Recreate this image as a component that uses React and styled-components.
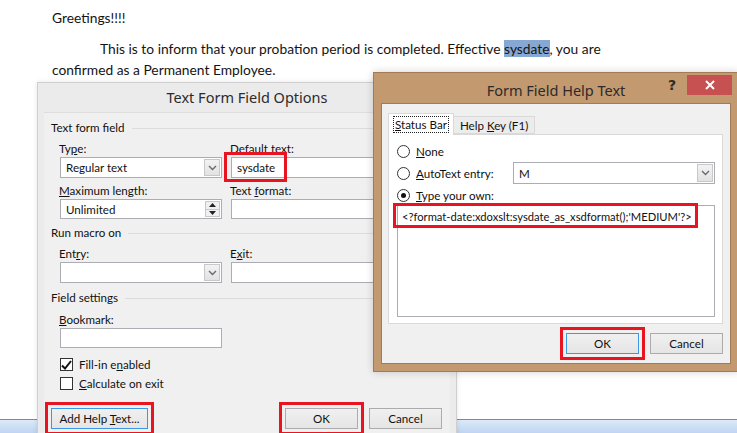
import React from "react";
import styled, { createGlobalStyle, css } from "styled-components";

const GlobalStyle = createGlobalStyle`
  html, body { margin: 0; padding: 0; background: #fff; overflow: hidden; }
  * { box-sizing: border-box; }
`;

const Screen = styled.div`
  position: relative;
  width: 737px;
  height: 433px;
  overflow: hidden;
  display: flex;
  flex-direction: column;
  background: #fff;
`;

/* ---------- document behind the dialogs ---------- */

const Doc = styled.div`
  padding: 7px 0 0 52px;
  font-family: Lato, "Liberation Sans", sans-serif;
  font-size: 13.8px;
  line-height: 21px;
  color: #141414;
`;

const Para = styled.p`
  margin: 0 0 ${(p) => p.$gap || 0}px;
`;

const Indent = styled.span`
  display: inline-block;
  width: 48px;
`;

const Selected = styled.span`
  background: #86a8d2;
`;

const StatusStrip = styled.div`
  margin-top: auto;
  height: 14px;
  border-top: 1px solid #6a8dbf;
  background: linear-gradient(#dde9f9, #bed5f2);
`;

/* ---------- window chrome ---------- */

const Window = styled.div`
  position: absolute;
  left: ${(p) => p.$x}px;
  top: ${(p) => p.$y}px;
  width: ${(p) => p.$w}px;
  height: ${(p) => p.$h}px;
  display: flex;
  flex-direction: column;
  font-family: Lato, "Noto Sans", sans-serif;
  font-size: 11.6px;
  color: #111;
  ${(p) =>
    p.$active
      ? css`
          background: #c3996f;
          border: 1px solid #a37a55;
          box-shadow: 0 0 8px rgba(0, 0, 0, 0.18);
        `
      : css`
          background: #ebebeb;
          border: 1px solid #cfcfcf;
          box-shadow: 0 0 5px rgba(0, 0, 0, 0.1);
        `}
`;

const TitleBar = styled.div`
  height: ${(p) => p.$h}px;
  display: grid;
  grid-template-columns: 1fr auto 1fr;
  align-items: start;
`;

const Title = styled.div`
  grid-column: 2;
  font-family: "Noto Sans", sans-serif;
  font-size: 14.5px;
  line-height: ${(p) => p.$h}px;
  color: #2b2b2b;
  white-space: nowrap;
`;

const Caption = styled.div`
  grid-column: 3;
  justify-self: end;
  display: flex;
  align-items: center;
  padding-top: 2px;
  padding-right: 6px;
`;

const HelpGlyph = styled.span`
  font-family: "DejaVu Sans", sans-serif;
  font-weight: bold;
  font-size: 14px;
  color: #2a2a2a;
  width: 30px;
  text-align: center;
  line-height: 20px;
`;

const CloseBtn = styled.div`
  width: 45px;
  height: 20px;
  background: #c75050;
  display: flex;
  align-items: center;
  justify-content: center;
`;

const Client = styled.div`
  flex: 1;
  display: flex;
  flex-direction: column;
  background: #f0f0f0;
  ${(p) =>
    p.$active
      ? css`
          margin: 0 7px 7px 7px;
          border: 1px solid #9f7b58;
          padding: 9px 7px 0 6px;
        `
      : css`
          margin: 0 6px;
          border-top: 1px solid #dedede;
          padding: 6px 8px 0 7px;
        `}
`;

/* ---------- form controls ---------- */

const GroupHead = styled.div`
  display: flex;
  align-items: center;
  gap: 7px;
  height: 16px;
  line-height: 16px;
  margin-top: ${(p) => p.$mt || 0}px;
  &::after {
    content: "";
    flex: 1;
    border-top: 1px solid #dcdcdc;
  }
`;

const FieldGrid = styled.div`
  display: grid;
  grid-template-columns: 162px 1fr;
  column-gap: 9px;
  row-gap: 4px;
  padding-left: 9px;
  margin-top: 4px;
`;

const Field = styled.div`
  display: flex;
  flex-direction: column;
  margin-top: ${(p) => p.$mt || 0}px;
  width: ${(p) => (p.$w ? p.$w + "px" : "auto")};
`;

const Label = styled.label`
  display: block;
  height: 17px;
  line-height: 17px;
  margin-left: -1px;
  white-space: nowrap;
`;

const Box = styled.div`
  position: relative;
  flex: ${(p) => (p.$grow ? 1 : "none")};
  height: ${(p) => p.$h || 21}px;
  background: #fff;
  border: 1px solid #abadb3;
  display: flex;
  align-items: center;
  padding-left: 5px;
  white-space: nowrap;
`;

const BoxText = styled.span`
  flex: 1;
`;

const DropBtn = styled.div`
  width: 16px;
  align-self: stretch;
  margin: 1px;
  background: linear-gradient(#f2f2f2, #e2e2e2);
  border: 1px solid #c8c8c8;
  display: flex;
  align-items: center;
  justify-content: center;
`;

const Spin = styled.div`
  width: 15px;
  align-self: stretch;
  margin: 1px;
  display: flex;
  flex-direction: column;
  border: 1px solid #c8c8c8;
  background: #f0f0f0;
  & > div {
    flex: 1;
    display: flex;
    align-items: center;
    justify-content: center;
  }
  & > div + div {
    border-top: 1px solid #c8c8c8;
  }
`;

const Mark = styled.div`
  position: absolute;
  left: ${(p) => p.$l}px;
  top: ${(p) => p.$t}px;
  width: ${(p) => p.$w}px;
  height: ${(p) => p.$h}px;
  border: 3px solid #e8141f;
  pointer-events: none;
`;

const CheckRow = styled.div`
  display: flex;
  align-items: center;
  gap: 6px;
  height: ${(p) => p.$h || 19}px;
  padding-left: ${(p) => p.$pl || 0}px;
  margin-top: ${(p) => p.$mt || 0}px;
`;

const CheckBox = styled.span`
  width: 13px;
  height: 13px;
  flex-shrink: 0;
  border: 1px solid #333;
  background: #fff;
  display: flex;
  align-items: center;
  justify-content: center;
  border-radius: ${(p) => (p.$round ? "50%" : "0")};
`;

const Dot = styled.span`
  width: 5px;
  height: 5px;
  border-radius: 50%;
  background: #111;
`;

const ButtonRow = styled.div`
  display: flex;
  align-items: center;
  gap: 11px;
  margin-top: ${(p) => p.$mt}px;
`;

const Spacer = styled.div`
  flex: 1;
`;

const Button = styled.button`
  width: ${(p) => p.$w || 73}px;
  height: 21px;
  padding: 0;
  font: inherit;
  color: #111;
  background: linear-gradient(#f0f0f0, #e5e5e5);
  border: 1px solid ${(p) => (p.$focus ? "#3c98e6" : "#acacac")};
  ${(p) =>
    p.$marked &&
    css`
      outline: 3px solid #e8141f;
      outline-offset: 3px;
    `}
`;

/* ---------- help dialog ---------- */

const Tabs = styled.div`
  display: flex;
  align-items: flex-end;
  height: 21px;
  position: relative;
  z-index: 1;
`;

const Tab = styled.div`
  height: ${(p) => (p.$on ? 22 : 18)}px;
  padding: 0 ${(p) => (p.$on ? 5 : 6)}px;
  display: flex;
  align-items: center;
  white-space: pre;
  border: 1px solid #d9d9d9;
  border-bottom: ${(p) => (p.$on ? "none" : "1px solid #d9d9d9")};
  background: ${(p) => (p.$on ? "#fff" : "#ececec")};
  margin-bottom: ${(p) => (p.$on ? -1 : 0)}px;
  & + & {
    border-left: none;
  }
`;

const FocusText = styled.span`
  outline: 1px dotted #222;
  padding: 0 1px;
  line-height: 15px;
`;

const TabPanel = styled.div`
  background: #fff;
  border: 1px solid #d9d9d9;
  padding: 7px 7px 6px 8px;
  display: flex;
  flex-direction: column;
`;

const RadioLabel = styled.span`
  width: 91px;
  flex-shrink: 0;
`;

const TextArea = styled.div`
  position: relative;
  height: 112px;
  background: #fff;
  border: 1px solid #abadb3;
  padding: 3px 4px;
  font-size: 11.2px;
  line-height: 16px;
  white-space: nowrap;
`;

const Chevron = () => (
  <svg width="9" height="6" viewBox="0 0 9 6">
    <path d="M1 1l3.5 3.5L8 1" fill="none" stroke="#6a6a6a" strokeWidth="1.4" />
  </svg>
);

const Tri = ({ up }) => (
  <svg width="7" height="4" viewBox="0 0 7 4">
    <path d={up ? "M0 4L3.5 0L7 4Z" : "M0 0L3.5 4L7 0Z"} fill="#222" />
  </svg>
);

const Tick = () => (
  <svg width="11" height="10" viewBox="0 0 11 10">
    <path d="M1 5.5l3 3L10 1" fill="none" stroke="#111" strokeWidth="2" />
  </svg>
);

const CloseX = () => (
  <svg width="10" height="10" viewBox="0 0 10 10">
    <path d="M1 1L9 9M9 1L1 9" stroke="#fff" strokeWidth="2" />
  </svg>
);

function FieldOptions() {
  return (
    <Window $x={37} $y={82} $w={420} $h={360}>
      <TitleBar $h={29}>
        <Title $h={29}>Text Form Field Options</Title>
      </TitleBar>
      <Client>
        <GroupHead $mt={1}>Text form field</GroupHead>
        <FieldGrid>
          <Field>
            <Label>Ty<u>p</u>e:</Label>
            <Box>
              <BoxText>Regular text</BoxText>
              <DropBtn><Chevron /></DropBtn>
            </Box>
          </Field>
          <Field>
            <Label>Default text:</Label>
            <Box>
              <BoxText>sysdate</BoxText>
              <Mark $l={-8} $t={-6} $w={63} $h={30} />
            </Box>
          </Field>
          <Field>
            <Label><u>M</u>aximum length:</Label>
            <Box $h={20}>
              <BoxText>Unlimited</BoxText>
              <Spin>
                <div><Tri up /></div>
                <div><Tri /></div>
              </Spin>
            </Box>
          </Field>
          <Field>
            <Label>Text <u>f</u>ormat:</Label>
            <Box $h={20} />
          </Field>
        </FieldGrid>

        <GroupHead $mt={6}>Run macro on</GroupHead>
        <FieldGrid>
          <Field>
            <Label>Ent<u>r</u>y:</Label>
            <Box>
              <BoxText />
              <DropBtn><Chevron /></DropBtn>
            </Box>
          </Field>
          <Field>
            <Label>E<u>x</u>it:</Label>
            <Box />
          </Field>
        </FieldGrid>

        <GroupHead $mt={7}>Field settings</GroupHead>
        <FieldGrid>
          <Field $mt={1} $w={162}>
            <Label><u>B</u>ookmark:</Label>
            <Box $h={20} />
          </Field>
        </FieldGrid>
        <CheckRow $pl={9} $mt={7}>
          <CheckBox><Tick /></CheckBox>
          <span>Fill-in e<u>n</u>abled</span>
        </CheckRow>
        <CheckRow $pl={9}>
          <CheckBox />
          <span><u>C</u>alculate on exit</span>
        </CheckRow>

        <ButtonRow $mt={15}>
          <Button $w={97} $focus $marked>Add Help <u>T</u>ext...</Button>
          <Spacer />
          <Button $marked>OK</Button>
          <Button>Cancel</Button>
        </ButtonRow>
      </Client>
    </Window>
  );
}

function HelpText() {
  return (
    <Window $x={373} $y={72} $w={366} $h={300} $active>
      <TitleBar $h={30}>
        <Title $h={34}>Form Field Help Text</Title>
        <Caption>
          <HelpGlyph>?</HelpGlyph>
          <CloseBtn><CloseX /></CloseBtn>
        </Caption>
      </TitleBar>
      <Client $active>
        <Tabs>
          <Tab $on><FocusText><u>S</u>tatus Bar</FocusText></Tab>
          <Tab><span>Help <u>K</u>ey (F1)</span></Tab>
        </Tabs>
        <TabPanel>
          <CheckRow>
            <CheckBox $round />
            <span><u>N</u>one</span>
          </CheckRow>
          <CheckRow $h={22} $mt={1}>
            <CheckBox $round />
            <RadioLabel><u>A</u>utoText entry:</RadioLabel>
            <Box $h={22} $grow>
              <BoxText>M</BoxText>
              <DropBtn><Chevron /></DropBtn>
            </Box>
          </CheckRow>
          <CheckRow $h={19} $mt={2}>
            <CheckBox $round><Dot /></CheckBox>
            <span><u>T</u>ype your own:</span>
          </CheckRow>
          <TextArea>
            {"<?format-date:xdoxslt:sysdate_as_xsdformat();'MEDIUM'?>"}
            <Mark $l={-5} $t={-3} $w={305} $h={25} />
          </TextArea>
        </TabPanel>
        <ButtonRow $mt={9}>
          <Spacer />
          <Button $focus $marked>OK</Button>
          <Button>Cancel</Button>
        </ButtonRow>
      </Client>
    </Window>
  );
}

export default function App() {
  return (
    <>
      <GlobalStyle />
      <Screen>
        <Doc>
          <Para $gap={10}>Greetings!!!!</Para>
          <Para>
            <Indent />
            This is to inform that your probation period is completed. Effective{" "}
            <Selected>sysdate</Selected>, you are
            <br />
            confirmed as a Permanent Employee.
          </Para>
        </Doc>
        <StatusStrip />
        <FieldOptions />
        <HelpText />
      </Screen>
    </>
  );
}
